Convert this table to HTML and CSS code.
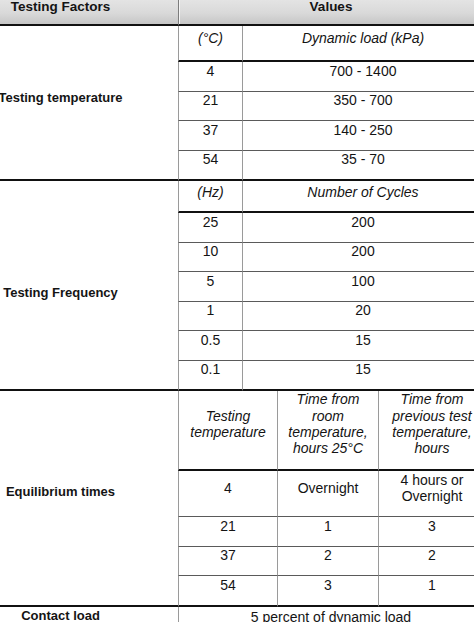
FILE: index.html
```html
<!DOCTYPE html>
<html lang="en">
<head>
<meta charset="utf-8">
<title>Testing factors</title>
<link rel="stylesheet" href="styles.css">
</head>
<body>
<div class="sheet">
  <div class="cell head factor-head">Testing Factors</div>
  <div class="cell head values-head">Values</div>

  <div class="cell factor f-temp">Testing temperature</div>
  <div class="cell v a it sub">(°C)</div>
  <div class="cell v bcd it sub">Dynamic load (kPa)</div>
  <div class="cell v a">4</div><div class="cell v bcd">700 - 1400</div>
  <div class="cell v a">21</div><div class="cell v bcd">350 - 700</div>
  <div class="cell v a">37</div><div class="cell v bcd">140 - 250</div>
  <div class="cell v a end">54</div><div class="cell v bcd end">35 - 70</div>

  <div class="cell factor f-freq">Testing Frequency</div>
  <div class="cell v a it sub hz">(Hz)</div>
  <div class="cell v bcd it sub hz">Number of Cycles</div>
  <div class="cell v a">25</div><div class="cell v bcd">200</div>
  <div class="cell v a">10</div><div class="cell v bcd">200</div>
  <div class="cell v a">5</div><div class="cell v bcd">100</div>
  <div class="cell v a">1</div><div class="cell v bcd">20</div>
  <div class="cell v a">0.5</div><div class="cell v bcd">15</div>
  <div class="cell v a end">0.1</div><div class="cell v bcd end">15</div>

  <div class="cell factor f-eq">Equilibrium times</div>
  <div class="cell v ab it sub tall">Testing<br>temperature</div>
  <div class="cell v c it sub tall">Time from<br>room<br>temperature,<br>hours 25°C</div>
  <div class="cell v d it sub tall">Time from<br>previous test<br>temperature,<br>hours</div>
  <div class="cell v ab">4</div><div class="cell v c">Overnight</div><div class="cell v d">4 hours or<br>Overnight</div>
  <div class="cell v ab">21</div><div class="cell v c">1</div><div class="cell v d">3</div>
  <div class="cell v ab">37</div><div class="cell v c">2</div><div class="cell v d">2</div>
  <div class="cell v ab end">54</div><div class="cell v c end">3</div><div class="cell v d end">1</div>

  <div class="cell factor f-contact">Contact load</div>
  <div class="cell v all">5 percent of dynamic load</div>
</div>
</body>
</html>
```

FILE: styles.css
```css
html, body {
  margin: 0;
  padding: 0;
  background: #ffffff;
  overflow: hidden;
}

body {
  font-family: "Liberation Sans", Arial, sans-serif;
  color: #141414;
}

.sheet {
  display: grid;
  width: 540px;
  margin-left: -57px;
  margin-top: -12px;
  grid-template-columns: 235px 64px 35px 101px 105px;
  grid-template-rows:
    38px
    36px 29.5px 29.5px 29.5px 30.5px
    32px 29.5px 29.5px 29.5px 29.5px 29.5px 30.5px
    80px 46px 29.5px 29.5px 30.5px
    30px;
}

.cell {
  box-sizing: border-box;
  display: flex;
  align-items: center;
  justify-content: center;
  text-align: center;
  font-size: 14px;
  line-height: 16px;
  padding-bottom: 11px;
  white-space: nowrap;
}

.v {
  border-left: 1px solid #9a9a9a;
  border-bottom: 1px solid #5a5a5a;
}

.a { grid-column: 2; }
.bcd { grid-column: 3 / 6; }
.ab { grid-column: 2 / 4; }
.c { grid-column: 4; }
.d { grid-column: 5; padding-left: 2px; }
.all { grid-column: 2 / 6; padding-bottom: 0; align-items: flex-start; padding-top: 2px; }

.it { font-style: italic; }

.sub { border-bottom: 2px solid #111111; }
.end { border-bottom: 2px solid #111111; }

.hz { padding-bottom: 9px; }

.tall {
  font-size: 14px;
  line-height: 16.3px;
  padding-bottom: 12px;
}

.head {
  grid-column: 1;
  font-weight: bold;
  font-size: 13.5px;
  padding-bottom: 0;
  padding-top: 1px;
  background: linear-gradient(#ededed, #d9d9d9 70%, #c6c6c6);
  border-bottom: 2px solid #111111;
}

.values-head {
  grid-column: 2 / 6;
  border-left: 1px solid #7c7c7c;
  box-shadow: inset 1px 0 0 #f4f4f4;
}

.factor {
  grid-column: 1;
  font-weight: bold;
  font-size: 13px;
  align-items: flex-start;
  padding-bottom: 0;
  border-bottom: 2px solid #111111;
}

.f-temp { grid-row: span 5; padding-top: 64px; }
.f-freq { grid-row: span 7; padding-top: 104px; }
.f-eq { grid-row: span 5; padding-top: 93px; }
.f-contact { grid-row: span 1; padding-top: 1px; border-bottom: 0; }
```
